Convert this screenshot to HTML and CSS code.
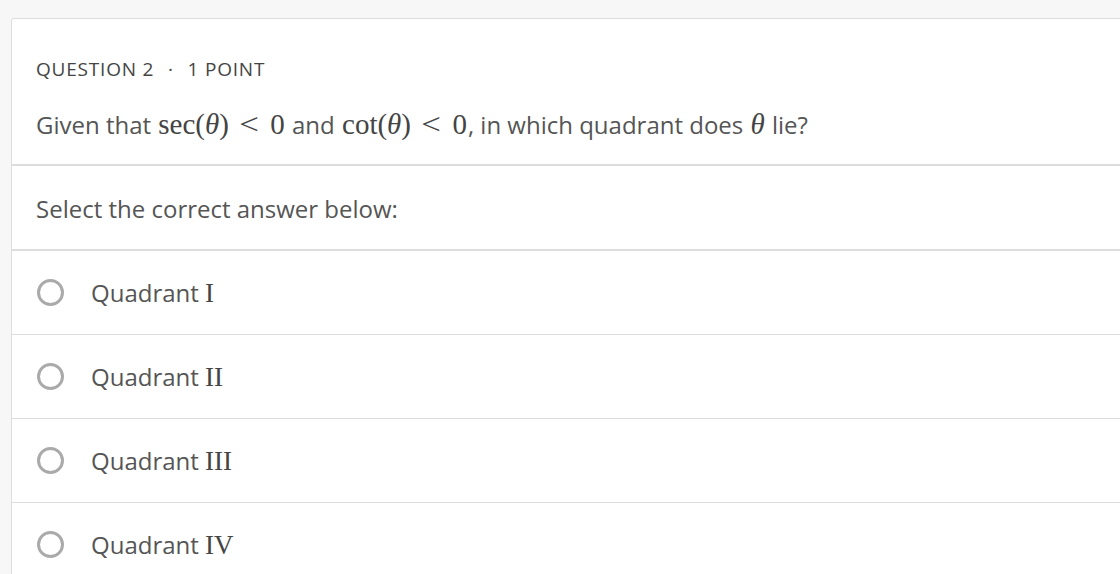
FILE: index.html
```html
<!DOCTYPE html>
<html>
<head>
<meta charset="utf-8">
<link rel="stylesheet" href="styles.css">
</head>
<body>
<div class="card">
  <div class="q-head">
    <div class="q-label">Question 2 <span class="dot">·</span> 1 point</div>
    <div class="q-text">Given that <span class="m">sec(<i>θ</i>)<span class="rel">&lt;</span>0</span> and <span class="m">cot(<i>θ</i>)<span class="rel">&lt;</span>0</span>, in which quadrant does <span class="m"><i>θ</i></span> lie?</div>
  </div>
  <div class="prompt">Select the correct answer below:</div>
  <div class="answers">
    <div class="answer"><span class="radio"></span><span class="a-text">Quadrant <span class="m">I</span></span></div>
    <div class="answer"><span class="radio"></span><span class="a-text">Quadrant <span class="m">II</span></span></div>
    <div class="answer"><span class="radio"></span><span class="a-text">Quadrant <span class="m">III</span></span></div>
    <div class="answer"><span class="radio"></span><span class="a-text">Quadrant <span class="m">IV</span></span></div>
  </div>
</div>
</body>
</html>
```
FILE: styles.css
```css
html, body {
  margin: 0;
  padding: 0;
  background: #f7f7f7;
  overflow: hidden;
  height: 100%;
}
body {
  padding: 18px 0 0 11px;
  font-family: "Open Sans", "Noto Sans", sans-serif;
  color: #555;
}
.card {
  background: #fff;
  border: 1px solid #ddd;
  border-radius: 3px;
  margin-right: -20px;
  min-height: 700px;
}
.q-head {
  padding: 38px 24px 24px 24px;
  border-bottom: 2px solid #ddd;
}
.q-label {
  font-size: 19px;
  line-height: 24px;
  text-transform: uppercase;
  letter-spacing: 0.8px;
  color: #444;
}
.dot {
  margin: 0 8px;
}
.q-text {
  margin-top: 29px;
  font-size: 24px;
  line-height: 30px;
  color: #555;
}
.q-text .m {
  padding: 0 1px;
}
.m {
  font-family: "Liberation Serif", "DejaVu Serif", serif;
  font-size: 29px;
  line-height: 1;
  color: #444;
}
.m i {
  font-style: italic;
}
.rel {
  display: inline-block;
  margin: 0 13px 0 12px;
  transform: scaleX(1.2);
}
.prompt {
  padding: 28px 24px 25px 24px;
  font-size: 24px;
  line-height: 30px;
  border-bottom: 2px solid #ddd;
}
.answer {
  display: flex;
  align-items: center;
  height: 83px;
  padding-left: 25px;
  border-bottom: 1px solid #ddd;
}
.radio {
  width: 21px;
  height: 21px;
  border: 3px solid #aaa;
  border-radius: 50%;
  flex-shrink: 0;
}
.a-text {
  margin-left: 27px;
  font-size: 24px;
  line-height: 30px;
  color: #555;
}
.a-text .m {
  font-size: 27px;
}
```
